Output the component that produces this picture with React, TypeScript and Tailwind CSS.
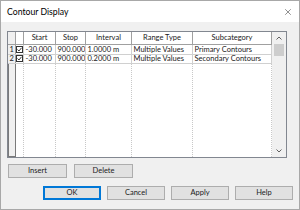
import { X } from 'lucide-react';

const COLS = [
  { key: 'start', label: 'Start', w: 'w-[32px]' },
  { key: 'stop', label: 'Stop', w: 'w-[30px]' },
  { key: 'interval', label: 'Interval', w: 'w-[46px]' },
  { key: 'range', label: 'Range Type', w: 'w-[61px]' },
  { key: 'sub', label: 'Subcategory', w: 'w-[79px]' },
] as const;

const ROWS = [
  { start: '-30.000', stop: '900.000', interval: '1.0000 m', range: 'Multiple Values', sub: 'Primary Contours' },
  { start: '-30.000', stop: '900.000', interval: '0.2000 m', range: 'Multiple Values', sub: 'Secondary Contours' },
];

function Check() {
  return (
    <div className="w-[7px] h-[7px] border border-[#333] bg-white flex items-center justify-center">
      <svg width="5" height="5" viewBox="0 0 5 5">
        <path d="M0.5 2.5 L2 4 L4.5 0.8" stroke="#222" strokeWidth="0.9" fill="none" />
      </svg>
    </div>
  );
}

function Button({ label, primary, w = 'w-[58px]' }: { label: string; primary?: boolean; w?: string }) {
  return (
    <div
      className={`${w} h-[14px] flex items-center justify-center bg-[#e1e1e1] text-[7.5px] text-[#222] ${
        primary ? 'border border-[#0078d7] shadow-[inset_0_0_0_1px_#0078d7]' : 'border border-[#adadad]'
      }`}
    >
      {label}
    </div>
  );
}

export default function App() {
  return (
    <div
      className="w-[300px] h-[210px] bg-[#f0f0f0] border border-[#a8a8a8] flex flex-col overflow-hidden"
      style={{ fontFamily: 'Lato, "Noto Sans", sans-serif' }}
    >
      {/* Title bar */}
      <div className="h-[21px] bg-white flex items-center justify-between pl-[6px] pr-[6px] shrink-0">
        <span className="text-[8.7px] text-black">Contour Display</span>
        <X className="w-[10px] h-[10px] text-[#333]" strokeWidth={1.3} />
      </div>

      {/* Grid */}
      <div className="mt-[9px] ml-[6px] w-[280px] h-[127px] border border-[#828790] bg-white flex text-[7.5px] text-[#1a1a1a] leading-none">
        <div className="w-[264px] flex flex-col">
          {/* Header */}
          <div className="flex h-[13px] border-b border-[#a0a0a0] shrink-0">
            <div className="w-[8px] border-r border-[#a0a0a0] bg-[#f0f0f0]" />
            <div className="w-[8px] border-r border-[#a0a0a0]" />
            {COLS.map((c) => (
              <div key={c.key} className={`${c.w} border-r border-[#a0a0a0] flex items-center justify-center whitespace-nowrap`}>
                {c.label}
              </div>
            ))}
          </div>

          {/* Data rows */}
          {ROWS.map((r, i) => (
            <div key={i} className="flex h-[9.5px] border-b border-[#d0d0d0] shrink-0">
              <div className="w-[8px] border-r border-[#a0a0a0] bg-[#f0f0f0] flex items-center pl-[1.5px]">{i + 1}</div>
              <div className="w-[8px] border-r border-[#d0d0d0] flex items-center justify-center">
                <Check />
              </div>
              {COLS.map((c) => (
                <div key={c.key} className={`${c.w} border-r border-[#d0d0d0] flex items-center pl-[1.5px] whitespace-nowrap overflow-hidden`}>
                  {r[c.key]}
                </div>
              ))}
            </div>
          ))}

          {/* Empty area */}
          <div className="flex flex-1">
            <div className="w-[8px] border-r border-[#7a7a7a] border-l border-b bg-[#f0f0f0]" />
            <div className="w-[8px] border-r border-dotted border-[#c8c8c8]" />
            {COLS.map((c) => (
              <div key={c.key} className={`${c.w} border-r border-dotted border-[#c8c8c8]`} />
            ))}
          </div>
        </div>

        {/* Scrollbar */}
        <div className="w-[14px] bg-[#f0f0f0] flex flex-col items-center">
          <div className="h-[12px] flex items-center justify-center">
            <svg width="6" height="4" viewBox="0 0 6 4">
              <path d="M0.5 3.5 L3 1 L5.5 3.5" stroke="#606060" strokeWidth="1" fill="none" />
            </svg>
          </div>
          <div className="w-[10px] h-[12px] bg-[#cdcdcd]" />
          <div className="flex-1" />
          <div className="h-[12px] flex items-center justify-center">
            <svg width="6" height="4" viewBox="0 0 6 4">
              <path d="M0.5 0.5 L3 3 L5.5 0.5" stroke="#606060" strokeWidth="1" fill="none" />
            </svg>
          </div>
        </div>
      </div>

      {/* Insert / Delete */}
      <div className="mt-[6px] ml-[7px] flex gap-[7px]">
        <Button label="Insert" w="w-[59px]" />
        <Button label="Delete" w="w-[59px]" />
      </div>

      {/* Dialog buttons */}
      <div className="mt-[8px] mr-[6px] flex justify-end gap-[6px]">
        <Button label="OK" primary />
        <Button label="Cancel" />
        <Button label="Apply" />
        <Button label="Help" />
      </div>
    </div>
  );
}
